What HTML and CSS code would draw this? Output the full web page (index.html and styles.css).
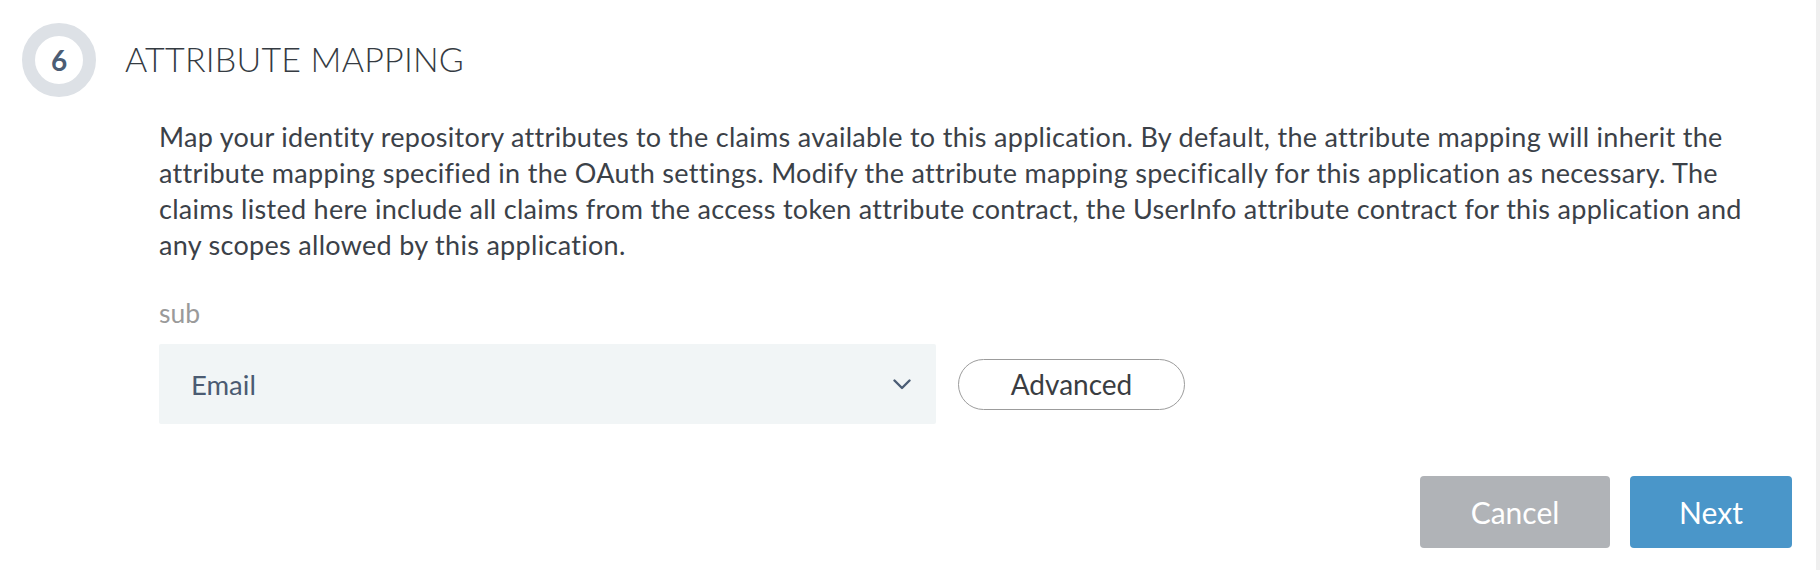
FILE: index.html
```html
<!DOCTYPE html>
<html lang="en">
<head>
  <meta charset="UTF-8">
  <meta name="viewport" content="width=device-width, initial-scale=1.0">
  <title> Attribute Mapping </title>
  <link rel="stylesheet" href="styles.css">
</head>
<body>
  <section class="step">
    <header class="step_head">
      <span class="step_num">6</span>
      <h2>ATTRIBUTE MAPPING</h2>
    </header>
    <div class="step_body">
      <p class="desc">Map your identity repository attributes to the claims available to this application. By default, the attribute mapping will inherit the attribute mapping specified in the OAuth settings. Modify the attribute mapping specifically for this application as necessary. The claims listed here include all claims from the access token attribute contract, the UserInfo attribute contract for this application and any scopes allowed by this application.</p>
      <label class="field_label">sub</label>
      <div class="field_row">
        <div class="select">
          <span>Email</span>
          <svg width="18" height="11" viewBox="0 0 18 11"><path d="M1.5 1.5 L9 9 L16.5 1.5" fill="none" stroke="#4b5d75" stroke-width="2.4" stroke-linecap="round" stroke-linejoin="round"/></svg>
        </div>
        <button class="advanced">Advanced</button>
      </div>
    </div>
    <footer class="step_foot">
      <button class="btn cancel">Cancel</button>
      <button class="btn next">Next</button>
    </footer>
  </section>
</body>
</html>
```

FILE: styles.css
```css
body, html{  width: 100%;  height: 100%;  }
body, h2, p, button{  margin: 0;  padding: 0;  }
button{  border: 0;  background-color: transparent;  font-family: inherit;  cursor: pointer;  }
body{
  background: #fff;  font-family: Lato, "Noto Sans", sans-serif;  color: #3b4148;
  overflow: hidden;
}
.step{
  height: 570px;  box-sizing: border-box;  border-right: 4px solid #efefef;
}
.step_head{  display: flex;  align-items: center;  padding: 23px 0 0 22px;  }
.step_num{
  width: 74px;  height: 74px;  box-sizing: border-box;  border: 13.5px solid #dde1e6;  border-radius: 50%;
  display: flex;  justify-content: center;  align-items: center;
  font-size: 28px;  font-weight: bold;  color: #4b5d75;
}
.step_head > h2{
  margin: -4px 0 0 29px;  font-size: 34px;  font-weight: 300;  color: #353b42;  letter-spacing: 0.2px;
}
.step_body{  padding-left: 159px;  }
.desc{
  width: 1620px;  margin-top: 22px;  font-size: 27px;  letter-spacing: 0.3px;  line-height: 36px;  color: #3b4148;
}
.field_label{
  display: block;  margin-top: 36px;  font-size: 26.5px;  line-height: 28px;  color: #9a9a9a;
}
.field_row{  display: flex;  align-items: center;  column-gap: 22px;  margin-top: 17px;  }
.select{
  width: 777px;  height: 80px;  box-sizing: border-box;  padding: 0 25px 0 32px;
  background: #f1f5f6;  border-radius: 2px;
  display: flex;  justify-content: space-between;  align-items: center;
  font-size: 27.5px;  color: #4b5b72;
}
.advanced{
  width: 227px;  height: 51px;  border: 1.5px solid #9c9c9c;  border-radius: 26px;
  font-size: 28px;  color: #3a3d42;
}
.step_foot{
  display: flex;  justify-content: flex-end;  column-gap: 20px;  padding-right: 24px;  margin-top: 52px;
}
.btn{  height: 72px;  border-radius: 4px;  font-size: 30px;  color: #fff;  }
.cancel{  width: 190px;  background: #b0b3b7;  }
.next{  width: 162px;  background: #4a96c9;  }
```
